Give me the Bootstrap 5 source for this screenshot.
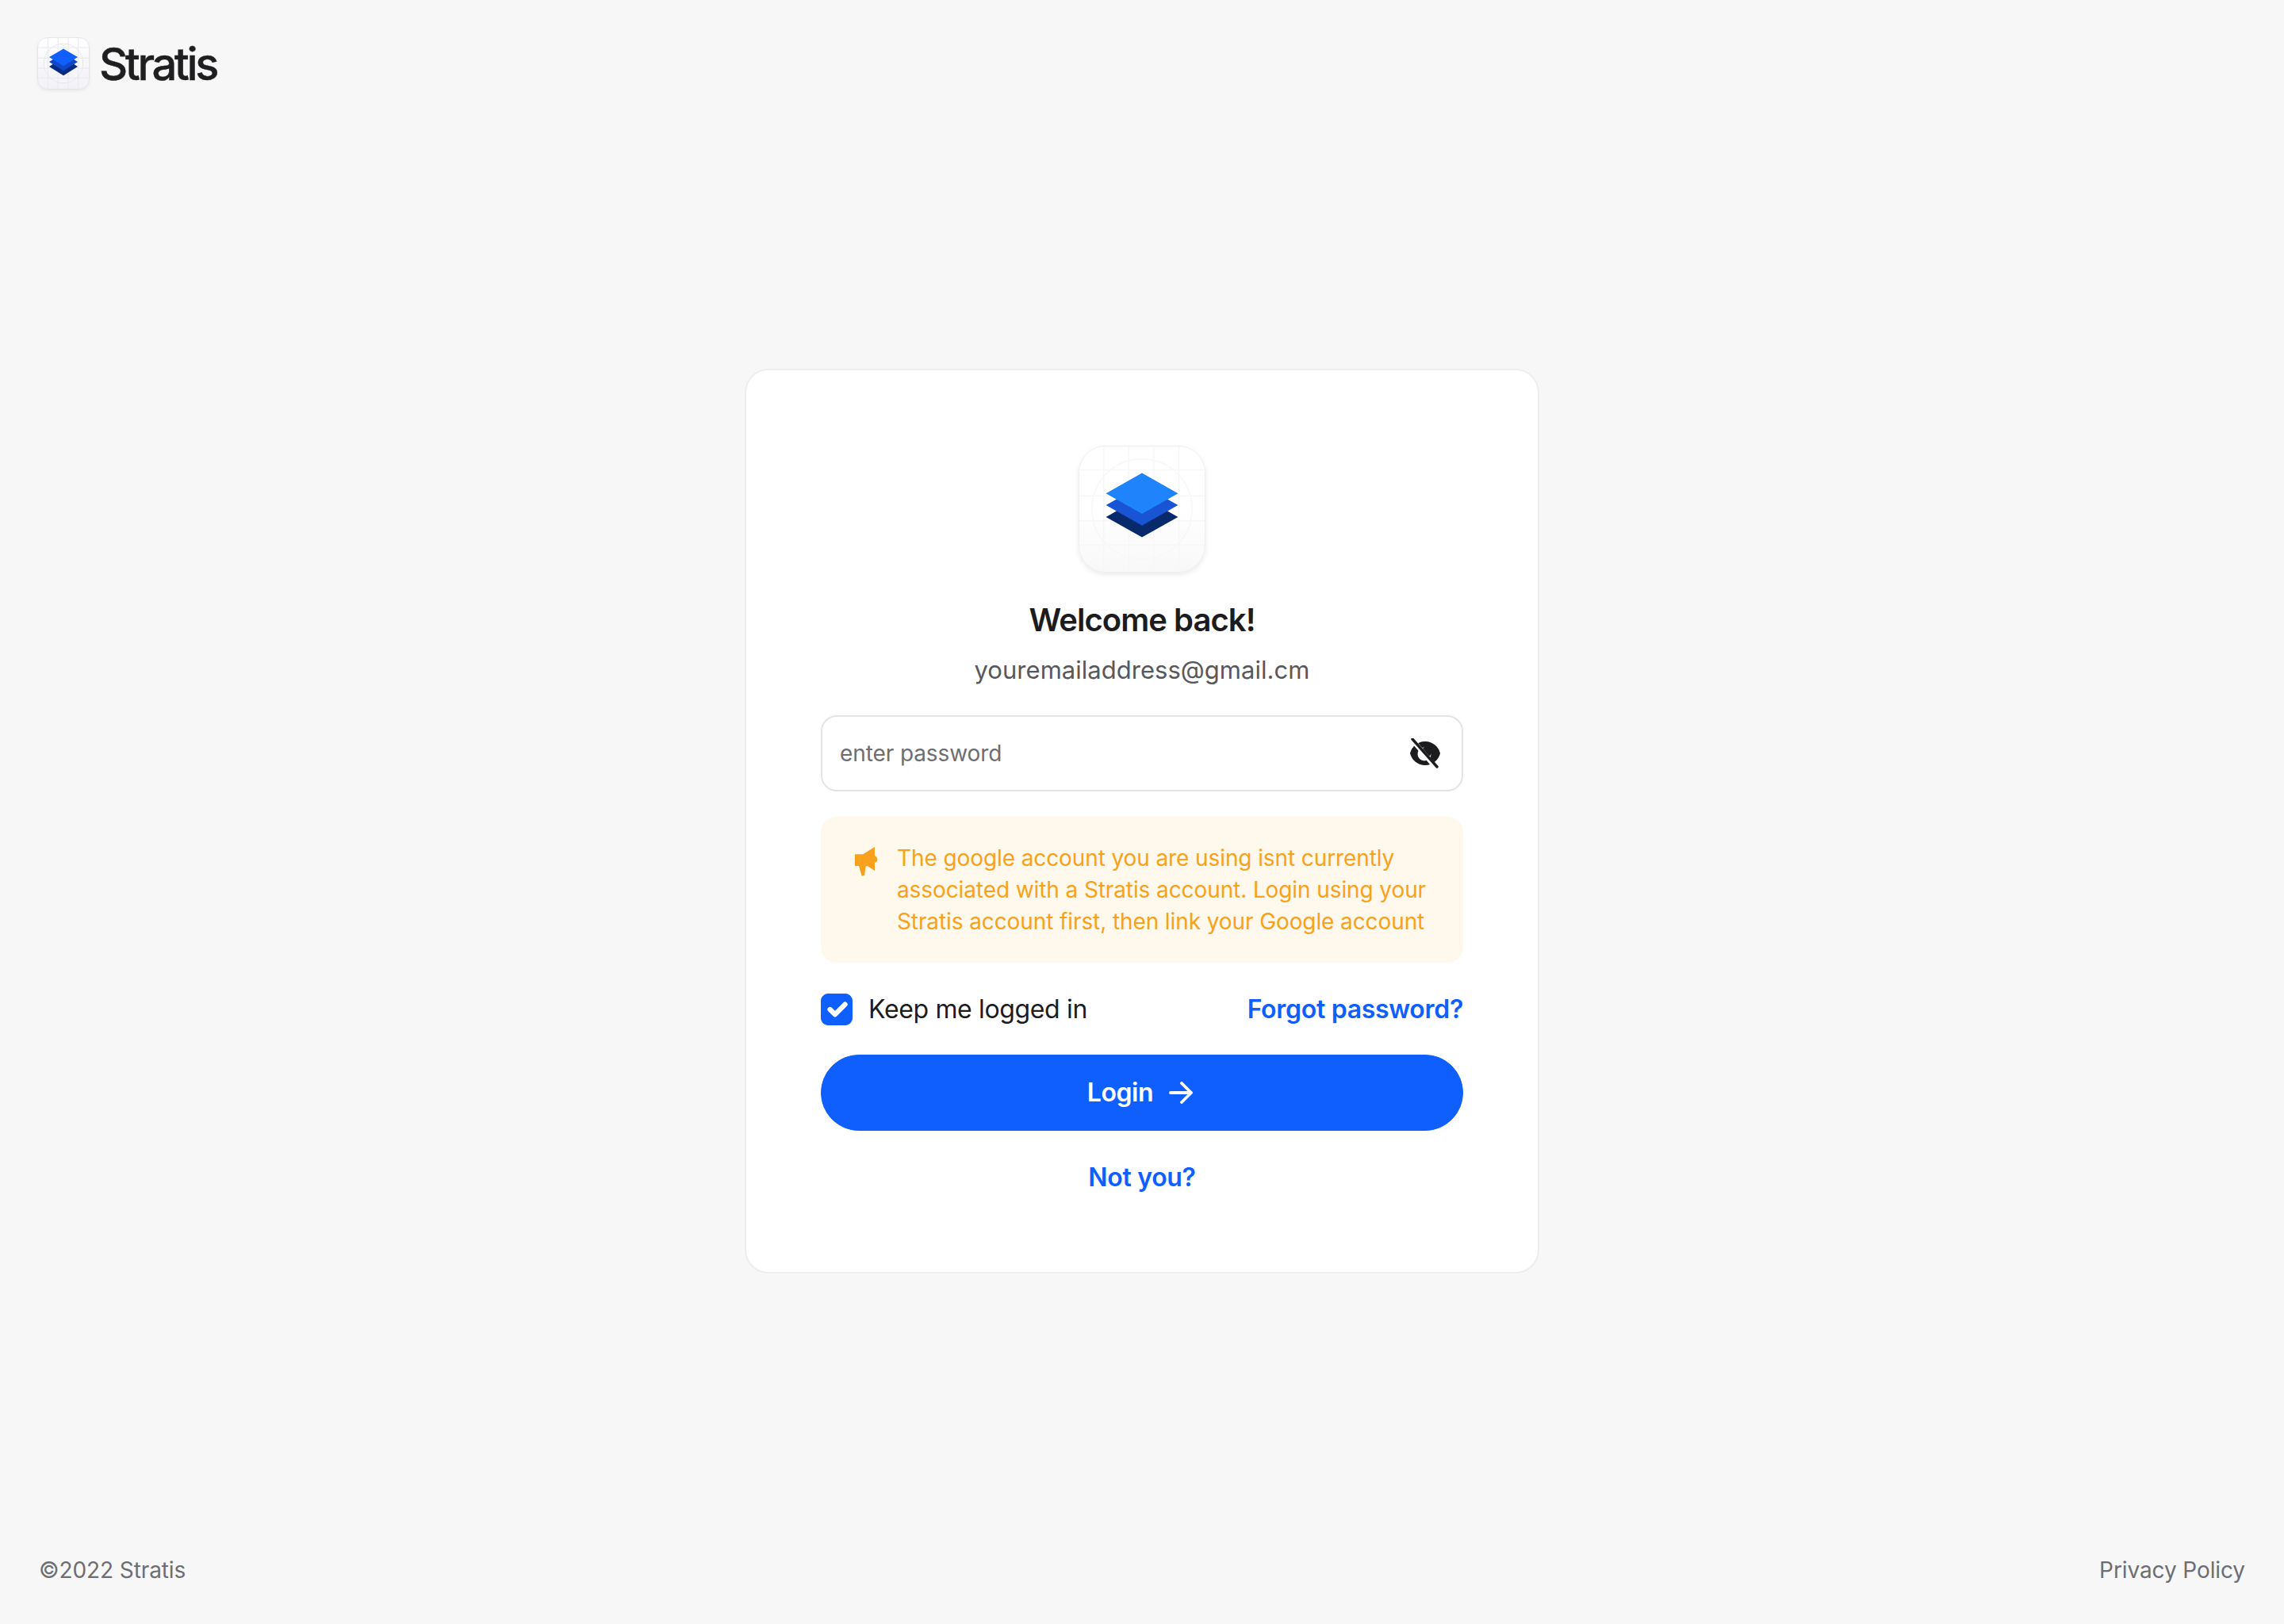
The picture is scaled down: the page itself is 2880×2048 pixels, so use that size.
<!DOCTYPE html>
<html lang="en">
<head>
    <meta charset="UTF-8">
    <meta name="viewport" content="width=device-width, initial-scale=1.0">
    <title>Stratis - Login</title>
    <link href="https://cdn.jsdelivr.net/npm/bootstrap@5.3.0/dist/css/bootstrap.min.css" rel="stylesheet">
    <style>
        body { background: #f7f7f7; font-family: Inter, "Liberation Sans", sans-serif; color: #1c1c1e; }
        .page-head { padding: 47px 47px 0; height: 114px; }
        .brand-box { width: 66px; height: 66px; border-radius: 13px; border: 1px solid #e6e6ea; background: linear-gradient(#fff, #f1f1f7); box-shadow: 0 2px 4px rgba(0,0,0,.06); }
        .brand-name { font-size: 56px; font-weight: 500; letter-spacing: -3.4px; line-height: 68px; margin-left: 12px; color: #1f1f21; -webkit-text-stroke: .4px #1f1f21; }
        .login-card { width: 1002px; height: 1141px; border: 2px solid #ededed; border-radius: 30px; padding: 95px 94px 0; box-shadow: none; }
        .app-box { width: 160px; height: 160px; border-radius: 34px; border: 1px solid #eeeeee; background: linear-gradient(#fff 50%, #f8f8f8); box-shadow: 0 3px 6px rgba(0,0,0,.08); }
        .welcome { font-size: 40px; font-weight: 600; line-height: 48px; letter-spacing: -.95px; margin: 36px 0 0; color: #1c1c1e; }
        .user-mail { font-size: 31px; line-height: 40px; margin: 19px 0 0; color: #58585c; letter-spacing: .03px; }
        .pass-wrap { margin-top: 37px; }
        .pass-input { height: 96px; border: 2px solid #e4e4e6; border-radius: 20px; font-size: 28px; padding: 0 90px 0 22px; color: #1c1c1e; letter-spacing: -.1px; }
        .pass-input::placeholder { color: #6e6e72; opacity: 1; }
        .eye-btn { position: absolute; right: 28px; top: 29px; width: 40px; height: 38px; line-height: 0; }
        .notice { margin: 32px 0 0; padding: 32px 30px 32px 42px; background: #fff8ec; color: #f8a11c; border: 0; border-radius: 20px; font-size: 28px; line-height: 40px; gap: 24px; letter-spacing: -.1px; }
        .notice svg { flex: none; margin-top: 6px; }
        .keep-row { margin-top: 39px; height: 40px; }
        .keep-row .form-check-input { width: 40px; height: 40px; margin: 0 20px 0 0; border-radius: 9px; background-color: #0f5fff; border-color: #0f5fff; background-size: 42px; }
        .keep-row .form-check-label { font-size: 32px; line-height: 40px; color: #1c1c1e; letter-spacing: -.35px; }
        .blue-link { color: #0f5fff; font-size: 32px; font-weight: 600; line-height: 40px; text-decoration: none; letter-spacing: -.3px; }
        .login-btn { height: 96px; margin-top: 37px; background: #0f5fff; border-color: #0f5fff; font-size: 32px; font-weight: 600; gap: 19px; letter-spacing: -.4px; padding-right: 16px; }
        .not-you { margin-top: 39px; }
        .page-foot { padding: 8px 49px 52px; font-size: 28px; line-height: 31px; color: #6e6e72; height: 91px; letter-spacing: -.1px; }
    </style>
</head>
<body>

<div class="d-flex flex-column vh-100">
    <header class="page-head d-flex align-items-start">
        <div class="brand-box">
            <svg width="64" height="64" viewBox="0 0 160 160">
                <g stroke="#e9e9ed" stroke-width="2.5" fill="none">
                    <path d="M31 0V160M63 0V160M95 0V160M127 0V160M0 30H160M0 63H160M0 95H160M0 126H160"/>
                    <circle cx="80" cy="80" r="62"/>
                </g>
                <path fill="#072a83" d="M80 60 125 90 80 118 35 90Z"/>
                <path fill="#0f47c4" d="M80 46 125 75 80 103 35 75Z"/>
                <path fill="#0f5fff" d="M80 34 125 60 80 88 35 60Z"/>
            </svg>
        </div>
        <div class="brand-name">Stratis</div>
    </header>

    <main class="flex-grow-1 d-flex justify-content-center align-items-center">
        <div class="card login-card bg-white">
            <div class="text-center">
                <div class="app-box mx-auto">
                    <svg width="158" height="158" viewBox="0 0 160 160">
                        <g stroke="#f7f7f7" stroke-width="1.5" fill="none">
                            <path d="M31 0V160M63 0V160M95 0V160M127 0V160M0 30H160M0 63H160M0 95H160M0 126H160"/>
                            <circle cx="80" cy="80" r="64"/>
                        </g>
                        <path fill="#082a6c" d="M80 64 126 90 80 116 34 90Z"/>
                        <path fill="#1854d3" d="M80 49 126 75 80 101 34 75Z"/>
                        <path fill="#1f84fb" d="M80 34 126 60 80 86 34 60Z"/>
                    </svg>
                </div>
                <h1 class="welcome">Welcome back!</h1>
                <p class="user-mail">youremailaddress@gmail.cm</p>
            </div>

            <div class="pass-wrap position-relative">
                <input type="password" class="form-control pass-input" placeholder="enter password">
                <span class="eye-btn">
                    <svg width="40" height="38" viewBox="0 0 40 38">
                        <path fill="#1c1c1e" d="M20 4C10 4 3 11 1 19c2 8 9 15 19 15s17-7 19-15C37 11 30 4 20 4Z"/>
                        <circle cx="19" cy="20" r="8.5" fill="#fff"/>
                        <circle cx="22" cy="17" r="6.5" fill="#1c1c1e"/>
                        <path d="M8 7 30 33" stroke="#fff" stroke-width="6"/>
                        <path d="M4 1 35 36" stroke="#1c1c1e" stroke-width="3.4" stroke-linecap="round"/>
                    </svg>
                </span>
            </div>

            <div class="alert notice d-flex" role="alert">
                <svg width="30" height="37" viewBox="0 0 90 111">
                    <path fill="#f8a11c" d="M3 28H34L78 0V34C86 38 88 42 88 48 88 54 85 58 78 60V90L50 72 44 74 39 108 29 110 18 72H3Z"/>
                </svg>
                <div>The google account you are using isnt currently associated with a Stratis account. Login using your Stratis account first, then link your Google account</div>
            </div>

            <div class="keep-row d-flex justify-content-between align-items-center">
                <div class="form-check d-flex align-items-center m-0 p-0">
                    <input class="form-check-input" type="checkbox" id="keepLogged" checked>
                    <label class="form-check-label" for="keepLogged">Keep me logged in</label>
                </div>
                <a href="#" class="blue-link">Forgot password?</a>
            </div>

            <button type="button" class="btn btn-primary rounded-pill login-btn w-100 d-flex justify-content-center align-items-center">
                <span>Login</span>
                <svg width="32" height="28" viewBox="0 0 32 28" fill="none" stroke="#fff" stroke-width="3.8" stroke-linecap="round" stroke-linejoin="round">
                    <path d="M3 14H29M17 2 29 14 17 26"/>
                </svg>
            </button>

            <div class="not-you text-center">
                <a href="#" class="blue-link">Not you?</a>
            </div>
        </div>
    </main>

    <footer class="page-foot d-flex justify-content-between">
        <span>©2022 Stratis</span>
        <span>Privacy Policy</span>
    </footer>
</div>

<script src="https://cdn.jsdelivr.net/npm/bootstrap@5.3.0/dist/js/bootstrap.bundle.min.js"></script>
</body>
</html>
